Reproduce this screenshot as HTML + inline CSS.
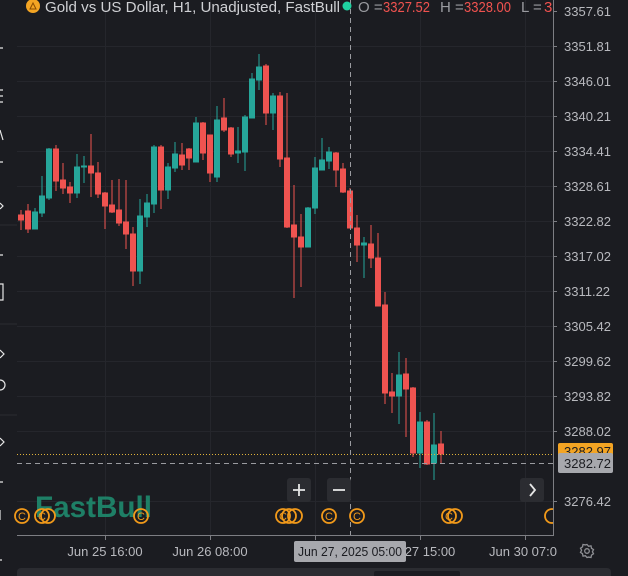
<!DOCTYPE html>
<html><head><meta charset="utf-8"><style>
html,body{margin:0;padding:0;background:#1b1c21;width:628px;height:576px;overflow:hidden;font-family:"Liberation Sans",sans-serif}
svg{display:block}
</style></head><body>
<svg width="628" height="576" viewBox="0 0 628 576" xmlns="http://www.w3.org/2000/svg" font-family="Liberation Sans, sans-serif">
<rect width="628" height="576" fill="#1b1c21"/>
<g stroke="#25262c" stroke-width="1">
<line x1="17" y1="46.5" x2="553" y2="46.5"/><line x1="17" y1="81.5" x2="553" y2="81.5"/><line x1="17" y1="116.5" x2="553" y2="116.5"/><line x1="17" y1="151.5" x2="553" y2="151.5"/><line x1="17" y1="186.5" x2="553" y2="186.5"/><line x1="17" y1="221.5" x2="553" y2="221.5"/><line x1="17" y1="256.5" x2="553" y2="256.5"/><line x1="17" y1="291.5" x2="553" y2="291.5"/><line x1="17" y1="326.5" x2="553" y2="326.5"/><line x1="17" y1="361.5" x2="553" y2="361.5"/><line x1="17" y1="396.5" x2="553" y2="396.5"/><line x1="17" y1="431.5" x2="553" y2="431.5"/><line x1="17" y1="501.5" x2="553" y2="501.5"/>
<line x1="105.5" y1="0" x2="105.5" y2="535"/><line x1="210.5" y1="0" x2="210.5" y2="535"/><line x1="315.5" y1="0" x2="315.5" y2="535"/><line x1="420.5" y1="0" x2="420.5" y2="535"/><line x1="525.5" y1="0" x2="525.5" y2="535"/>
</g>
<text x="35" y="517" font-size="30" font-weight="bold" fill="#1f8a6e" opacity="0.9" textLength="117" lengthAdjust="spacingAndGlyphs">FastBull</text>
<g stroke-width="1">
<g stroke="#ef5350" fill="#ef5350">
<line x1="21" y1="210" x2="21" y2="230"/><rect x="18.5" y="215" width="5" height="5"/>
<line x1="28" y1="204" x2="28" y2="233"/><rect x="25.5" y="211" width="5" height="18"/>
<line x1="56" y1="145" x2="56" y2="191"/><rect x="53.5" y="149" width="5" height="32"/>
<line x1="63" y1="163" x2="63" y2="194"/><rect x="60.5" y="180" width="5" height="8"/>
<line x1="70" y1="182" x2="70" y2="203"/><rect x="67.5" y="187" width="5" height="6"/>
<line x1="91" y1="134" x2="91" y2="197"/><rect x="88.5" y="166" width="5" height="7"/>
<line x1="98" y1="162" x2="98" y2="198"/><rect x="95.5" y="173" width="5" height="21"/>
<line x1="105" y1="192" x2="105" y2="229"/><rect x="102.5" y="193" width="5" height="13"/>
<line x1="112" y1="180" x2="112" y2="213"/><rect x="109.5" y="205" width="5" height="7"/>
<line x1="119" y1="179" x2="119" y2="226"/><rect x="116.5" y="210" width="5" height="13"/>
<line x1="126" y1="180" x2="126" y2="249"/><rect x="123.5" y="222" width="5" height="12"/>
<line x1="133" y1="227" x2="133" y2="286"/><rect x="130.5" y="234" width="5" height="37"/>
<line x1="161" y1="145" x2="161" y2="209"/><rect x="158.5" y="147" width="5" height="43"/>
<line x1="182" y1="143" x2="182" y2="170"/><rect x="179.5" y="155" width="5" height="10"/>
<line x1="189" y1="148" x2="189" y2="170"/><rect x="186.5" y="149" width="5" height="9"/>
<line x1="203" y1="122" x2="203" y2="160"/><rect x="200.5" y="123" width="5" height="30"/>
<line x1="210" y1="135" x2="210" y2="182"/><rect x="207.5" y="135" width="5" height="38"/>
<line x1="224" y1="98" x2="224" y2="132"/><rect x="221.5" y="118" width="5" height="12"/>
<line x1="231" y1="127" x2="231" y2="157"/><rect x="228.5" y="128" width="5" height="26"/>
<line x1="266" y1="64" x2="266" y2="125"/><rect x="263.5" y="66" width="5" height="47"/>
<line x1="280" y1="92" x2="280" y2="167"/><rect x="277.5" y="96" width="5" height="63"/>
<line x1="287" y1="93" x2="287" y2="228"/><rect x="284.5" y="158" width="5" height="69"/>
<line x1="294" y1="185" x2="294" y2="298"/><rect x="291.5" y="225" width="5" height="12"/>
<line x1="301" y1="214" x2="301" y2="287"/><rect x="298.5" y="237" width="5" height="10"/>
<line x1="336" y1="152" x2="336" y2="187"/><rect x="333.5" y="153" width="5" height="17"/>
<line x1="343" y1="163" x2="343" y2="193"/><rect x="340.5" y="169" width="5" height="23"/>
<line x1="350" y1="188" x2="350" y2="228"/><rect x="347.5" y="191" width="5" height="37"/>
<line x1="357" y1="215" x2="357" y2="262"/><rect x="354.5" y="228" width="5" height="17"/>
<line x1="371" y1="225" x2="371" y2="268"/><rect x="368.5" y="244" width="5" height="14"/>
<line x1="378" y1="233" x2="378" y2="306"/><rect x="375.5" y="258" width="5" height="48"/>
<line x1="385" y1="292" x2="385" y2="404"/><rect x="382.5" y="305" width="5" height="88"/>
<line x1="392" y1="373" x2="392" y2="413"/><rect x="389.5" y="392" width="5" height="4"/>
<line x1="406" y1="358" x2="406" y2="437"/><rect x="403.5" y="374" width="5" height="15"/>
<line x1="413" y1="387" x2="413" y2="457"/><rect x="410.5" y="388" width="5" height="65"/>
<line x1="427" y1="420" x2="427" y2="465"/><rect x="424.5" y="422" width="5" height="42"/>
<line x1="441" y1="431" x2="441" y2="463"/><rect x="438.5" y="444" width="5" height="10"/>
</g>
<g stroke="#26a69a" fill="#26a69a">
<line x1="35" y1="208" x2="35" y2="229"/><rect x="32.5" y="212" width="5" height="17"/>
<line x1="42" y1="176" x2="42" y2="217"/><rect x="39.5" y="196" width="5" height="17"/>
<line x1="49" y1="148" x2="49" y2="200"/><rect x="46.5" y="149" width="5" height="49"/>
<line x1="77" y1="154" x2="77" y2="198"/><rect x="74.5" y="167" width="5" height="26"/>
<line x1="84" y1="156" x2="84" y2="183"/><rect x="81.5" y="166" width="5" height="1"/>
<line x1="140" y1="199" x2="140" y2="284"/><rect x="137.5" y="216" width="5" height="55"/>
<line x1="147" y1="194" x2="147" y2="227"/><rect x="144.5" y="203" width="5" height="14"/>
<line x1="154" y1="145" x2="154" y2="213"/><rect x="151.5" y="147" width="5" height="57"/>
<line x1="168" y1="163" x2="168" y2="199"/><rect x="165.5" y="167" width="5" height="23"/>
<line x1="175" y1="142" x2="175" y2="172"/><rect x="172.5" y="154" width="5" height="14"/>
<line x1="196" y1="117" x2="196" y2="162"/><rect x="193.5" y="123" width="5" height="39"/>
<line x1="217" y1="106" x2="217" y2="182"/><rect x="214.5" y="120" width="5" height="57"/>
<line x1="238" y1="127" x2="238" y2="163"/><rect x="235.5" y="151" width="5" height="2"/>
<line x1="245" y1="115" x2="245" y2="171"/><rect x="242.5" y="117" width="5" height="35"/>
<line x1="252" y1="73" x2="252" y2="118"/><rect x="249.5" y="79" width="5" height="39"/>
<line x1="259" y1="54" x2="259" y2="90"/><rect x="256.5" y="67" width="5" height="13"/>
<line x1="273" y1="93" x2="273" y2="130"/><rect x="270.5" y="96" width="5" height="17"/>
<line x1="308" y1="207" x2="308" y2="247"/><rect x="305.5" y="208" width="5" height="39"/>
<line x1="315" y1="157" x2="315" y2="214"/><rect x="312.5" y="168" width="5" height="40"/>
<line x1="322" y1="138" x2="322" y2="170"/><rect x="319.5" y="160" width="5" height="10"/>
<line x1="329" y1="147" x2="329" y2="169"/><rect x="326.5" y="152" width="5" height="9"/>
<line x1="364" y1="237" x2="364" y2="278"/><rect x="361.5" y="243" width="5" height="2"/>
<line x1="399" y1="352" x2="399" y2="424"/><rect x="396.5" y="375" width="5" height="21"/>
<line x1="420" y1="412" x2="420" y2="468"/><rect x="417.5" y="422" width="5" height="31"/>
<line x1="434" y1="413" x2="434" y2="480"/><rect x="431.5" y="445" width="5" height="18"/>
</g>
</g>
<line x1="17" y1="454.5" x2="553" y2="454.5" stroke="#e0b23a" stroke-width="1" stroke-dasharray="1,2"/>
<line x1="17" y1="463.5" x2="553" y2="463.5" stroke="#9a9ba0" stroke-width="1" stroke-dasharray="5,4"/>
<line x1="350.5" y1="0" x2="350.5" y2="540" stroke="#9a9ba0" stroke-width="1" stroke-dasharray="5,4"/>
<g fill="none" stroke="#f29a1a" stroke-width="1.8">
<circle cx="22" cy="516" r="7"/><circle cx="42" cy="516" r="7"/><circle cx="48" cy="516" r="7"/><circle cx="141" cy="516" r="7"/>
<circle cx="283" cy="516" r="7"/><circle cx="289" cy="516" r="7"/><circle cx="295" cy="516" r="7"/><circle cx="329" cy="516" r="7"/><circle cx="357" cy="516" r="7"/>
<circle cx="449" cy="516" r="7"/><circle cx="455" cy="516" r="7"/><circle cx="552" cy="516" r="7"/>
</g>
<g fill="#f29a1a" font-size="11" text-anchor="middle">
<text x="22" y="520">C</text><text x="42" y="520">C</text><text x="141" y="520">C</text><text x="283" y="520">C</text><text x="329" y="520">C</text><text x="357" y="520">C</text><text x="449" y="520">C</text>
</g>
<rect x="287" y="478" width="24" height="24" rx="3" fill="#2b2c31"/>
<path d="M299 484v12M293 490h12" stroke="#e6e6e6" stroke-width="1.8"/>
<rect x="327" y="478" width="24" height="24" rx="3" fill="#2b2c31"/>
<path d="M333 490h12" stroke="#e6e6e6" stroke-width="1.8"/>
<rect x="520" y="478" width="24" height="24" rx="3" fill="#2b2c31"/>
<path d="M530 484l5 6-5 6" stroke="#e6e6e6" stroke-width="1.8" fill="none"/>
<rect x="554" y="0" width="74" height="576" fill="#1b1c21"/>
<line x1="553.5" y1="0" x2="553.5" y2="536" stroke="#7d7e83"/>
<line x1="17" y1="535.5" x2="553" y2="535.5" stroke="#7d7e83"/>
<g stroke="#7d7e83">
<line x1="553" y1="11.5" x2="557" y2="11.5"/><line x1="553" y1="46.5" x2="557" y2="46.5"/><line x1="553" y1="81.5" x2="557" y2="81.5"/><line x1="553" y1="116.5" x2="557" y2="116.5"/><line x1="553" y1="151.5" x2="557" y2="151.5"/><line x1="553" y1="186.5" x2="557" y2="186.5"/><line x1="553" y1="221.5" x2="557" y2="221.5"/><line x1="553" y1="256.5" x2="557" y2="256.5"/><line x1="553" y1="291.5" x2="557" y2="291.5"/><line x1="553" y1="326.5" x2="557" y2="326.5"/><line x1="553" y1="361.5" x2="557" y2="361.5"/><line x1="553" y1="396.5" x2="557" y2="396.5"/><line x1="553" y1="431.5" x2="557" y2="431.5"/><line x1="553" y1="501.5" x2="557" y2="501.5"/>
<line x1="105.5" y1="535" x2="105.5" y2="540"/><line x1="210.5" y1="535" x2="210.5" y2="540"/><line x1="315.5" y1="535" x2="315.5" y2="540"/><line x1="420.5" y1="535" x2="420.5" y2="540"/><line x1="525.5" y1="535" x2="525.5" y2="540"/>
</g>
<g fill="#b8b9be" font-size="13">
<text x="564" y="16">3357.61</text><text x="564" y="51">3351.81</text><text x="564" y="86">3346.01</text><text x="564" y="121">3340.21</text><text x="564" y="156">3334.41</text><text x="564" y="191">3328.61</text><text x="564" y="226">3322.82</text><text x="564" y="261">3317.02</text><text x="564" y="296">3311.22</text><text x="564" y="331">3305.42</text><text x="564" y="366">3299.62</text><text x="564" y="401">3293.82</text><text x="564" y="436">3288.02</text><text x="564" y="506">3276.42</text>
</g>
<rect x="558" y="443" width="55" height="16" rx="2" fill="#f3a423"/>
<text x="564" y="456" fill="#1b1c21" font-size="13">3282.97</text>
<rect x="558" y="453" width="55" height="20" rx="2" fill="#a7a8ad"/>
<text x="564" y="468" fill="#1b1c21" font-size="13">3282.72</text>
<g fill="#b8b9be" font-size="13" text-anchor="middle">
<text x="105" y="556">Jun 25 16:00</text><text x="210" y="556">Jun 26 08:00</text><text x="430" y="556">27 15:00</text><text x="523" y="556">Jun 30 07:0</text>
</g>
<rect x="294" y="541" width="112" height="21" rx="2" fill="#a7a8ad"/>
<text x="350" y="556" fill="#1b1c21" font-size="13" text-anchor="middle" textLength="104" lengthAdjust="spacingAndGlyphs">Jun 27, 2025 05:00</text>
<g transform="translate(587 551)" stroke="#8e8f94" fill="none" stroke-width="1.3">
<circle r="2.3"/><path d="M0-6.5l1.6 1.8 2.4-.4.5 2.4 2 1.3-1.1 2.1 1.1 2.1-2 1.3-.5 2.4-2.4-.4L0 6.5l-1.6-1.8-2.4.4-.5-2.4-2-1.3 1.1-2.1-1.1-2.1 2-1.3.5-2.4 2.4.4z"/>
</g>
<rect x="17" y="568" width="594" height="12" rx="4" fill="#2b2c31"/>
<rect x="374" y="571" width="86" height="8" rx="2" fill="#1b1c21"/>
<g stroke="#e6e6e6" stroke-width="1.2" fill="none">
<path d="M0 48h3M0 90h3M0 96h3M0 102h3M0 130l3 10M0 162h3M0 203l3 3-3 3M0 255h3M0 284h3v16h-3M0 350l4 4-4 4M0 380a4 4 0 1 1 0 10M0 438l4 4-4 4M0 482h3M0 510v10M0 560h2"/>
</g>
<line x1="0" y1="225" x2="17" y2="225" stroke="#2b2c31"/>
<line x1="0" y1="324" x2="17" y2="324" stroke="#2b2c31"/>
<line x1="0" y1="415" x2="17" y2="415" stroke="#2b2c31"/>
<circle cx="33" cy="6" r="7" fill="#f3a423"/>
<path d="M30 9l3-6 3 6z" stroke="#8a4b00" stroke-width="1" fill="none"/>
<text x="45" y="12" font-size="15" fill="#cfd0d4" textLength="295" lengthAdjust="spacingAndGlyphs">Gold vs US Dollar, H1, Unadjusted, FastBull</text>
<circle cx="347" cy="6" r="4.5" fill="#1fd1a0"/>
<g font-size="15">
<text x="358" y="12" fill="#9a9ba0">O =</text><text x="383" y="12" fill="#f0524f" textLength="47" lengthAdjust="spacingAndGlyphs">3327.52</text>
<text x="440" y="12" fill="#9a9ba0">H =</text><text x="464" y="12" fill="#f0524f" textLength="47" lengthAdjust="spacingAndGlyphs">3328.00</text>
<text x="521" y="12" fill="#9a9ba0">L =</text><text x="544" y="12" fill="#f0524f">3</text>
</g>
</svg>
</body></html>
